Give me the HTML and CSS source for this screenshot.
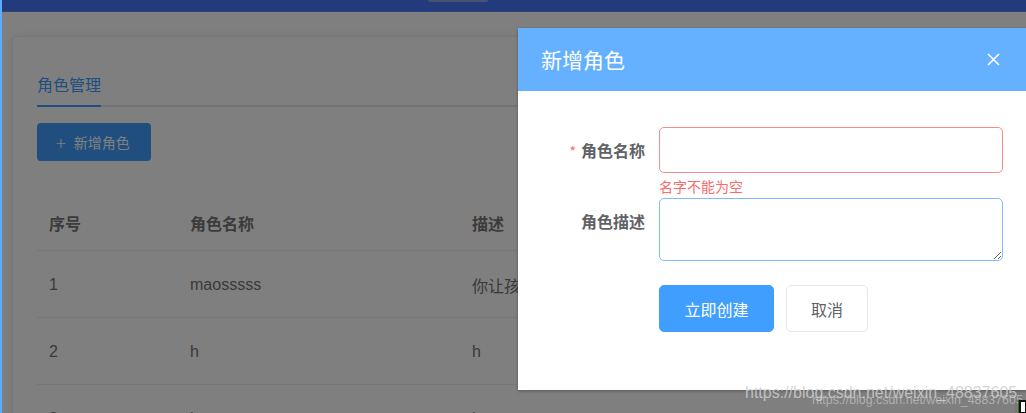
FILE: index.html
```html
<!DOCTYPE html>
<html lang="zh-CN">
<head>
<meta charset="utf-8">
<title>角色管理</title>
<link rel="stylesheet" href="styles.css">
</head>
<body>
<div class="screen">
  <div class="edge-strip"></div>
  <div class="page">
    <header class="topbar"><span class="topbar-pill"></span></header>
    <main class="main">
      <section class="card">
        <nav class="tabs">
          <span class="tab tab-active">角色管理</span>
        </nav>
        <button class="btn-add"><span class="plus">+</span>新增角色</button>
        <table class="grid">
          <colgroup><col class="c1"><col class="c2"><col></colgroup>
          <thead>
            <tr><th>序号</th><th>角色名称</th><th>描述</th></tr>
          </thead>
          <tbody>
            <tr><td>1</td><td>maosssss</td><td>你让孩子们开心一点</td></tr>
            <tr><td>2</td><td>h</td><td>h</td></tr>
            <tr><td>3</td><td>h</td><td>h</td></tr>
          </tbody>
        </table>
      </section>
    </main>
    <div class="overlay"></div>
    <div class="dialog">
      <div class="dialog-head">
        <span class="dialog-title">新增角色</span>
        <svg class="dialog-close" width="13" height="13" viewBox="0 0 13 13"><path d="M1 1L12 12M12 1L1 12" stroke="#fff" stroke-width="1.6" fill="none"/></svg>
      </div>
      <form class="dialog-body">
        <div class="form-item">
          <label class="form-label"><span class="req">*</span>角色名称</label>
          <div class="form-field">
            <input class="inp inp-error" type="text">
            <div class="form-error">名字不能为空</div>
          </div>
        </div>
        <div class="form-item">
          <label class="form-label">角色描述</label>
          <div class="form-field">
            <textarea class="inp txt"></textarea>
          </div>
        </div>
        <div class="form-item form-actions">
          <span class="form-label"></span>
          <div class="form-field actions">
            <button type="button" class="btn btn-primary">立即创建</button>
            <button type="button" class="btn btn-plain">取消</button>
          </div>
        </div>
      </form>
    </div>
    <div class="wm wm-1">https://blog.csdn.net/weixin_48837605</div>
    <div class="wm wm-2">https://blog.csdn.net/weixin_48837605</div>
    <div class="corner-box"></div>
  </div>
</div>
</body>
</html>
```

FILE: styles.css
```css
* { box-sizing: border-box; }
html, body { margin: 0; padding: 0; }
body {
  width: 1026px;
  height: 413px;
  overflow: hidden;
  background: #fff;
  font-family: "Liberation Sans", "Noto Sans CJK SC", sans-serif;
}
.screen {
  display: flex;
  width: 1026px;
  height: 413px;
}
.edge-strip {
  width: 2px;
  background: #5cadff;
  flex: none;
}
.page {
  position: relative;
  flex: 1;
  height: 413px;
  overflow: hidden;
  background: #fff;
}
.topbar {
  height: 12px;
  background: #4676f8;
  border-bottom: 1px solid #5a84f0;
  display: flex;
  align-items: flex-start;
}
.topbar-pill {
  margin-left: 426px;
  width: 60px;
  height: 2px;
  border-radius: 0 0 6px 6px;
  background: #8fa6e0;
}
.main {
  padding: 24px 10px 0 10px;
}
.card {
  border: 1px solid #ebeef5;
  border-radius: 4px;
  background: #fff;
  box-shadow: 0 2px 12px rgba(0,0,0,0.1);
  padding: 28px 24px 0 24px;
  height: 420px;
}
.tabs {
  display: flex;
  border-bottom: 2px solid #e4e7ed;
}
.tab {
  height: 40px;
  line-height: 38px;
  font-size: 16px;
  color: #303133;
  font-family: "Noto Sans CJK SC", sans-serif;
}
.tab-active {
  color: #409eff;
  border-bottom: 2px solid #409eff;
  margin-bottom: -2px;
  height: 42px;
}
.btn-add {
  margin-top: 16px;
  height: 38px;
  width: 114px;
  border: none;
  border-radius: 4px;
  background: #409eff;
  color: #fff;
  font-family: "Noto Sans CJK SC", sans-serif;
  font-size: 14px;
  display: flex;
  align-items: center;
  padding: 0 0 0 19px;
}
.plus {
  font-size: 18px;
  font-weight: 300;
  margin-right: 8px;
  line-height: 1;
}
.grid {
  margin-top: 35px;
  width: 100%;
  border-collapse: collapse;
  table-layout: fixed;
}
.grid .c1 { width: 141px; }
.grid .c2 { width: 282px; }
.grid th, .grid td {
  text-align: left;
  padding: 0 0 0 12px;
  border-bottom: 1px solid #ebeef5;
  font-size: 16px;
  white-space: nowrap;
  overflow: hidden;
}
.grid th {
  height: 54px;
  color: #777;
  font-weight: bold;
  font-family: "Noto Sans CJK SC", sans-serif;
  vertical-align: middle;
}
.grid td {
  height: 67px;
  padding-top: 2px;
  color: #747474;
}
.overlay {
  position: absolute;
  inset: 0;
  background: rgba(0,0,0,0.5);
}
.dialog {
  position: absolute;
  left: 516px;
  top: 28px;
  width: 510px;
  background: #fff;
  box-shadow: 0 1px 3px rgba(0,0,0,0.3);
}
.dialog-head {
  height: 63px;
  background: #66b1ff;
  display: flex;
  align-items: center;
  justify-content: space-between;
  padding: 0 28px 0 23px;
}
.dialog-title {
  color: #fff;
  font-size: 21px;
  font-family: "Noto Sans CJK SC", sans-serif;
  margin-top: -2px;
}
.dialog-close { display: block; }
.dialog-body {
  margin: 0;
  padding: 36px 25px 58px 20px;
}
.form-item {
  display: flex;
  margin-bottom: 24px;
}
.form-item.form-actions { margin-bottom: 0; }
.form-label {
  width: 121px;
  flex: none;
  text-align: right;
  padding-right: 14px;
  line-height: 46px;
  font-size: 16px;
  font-weight: bold;
  color: #606266;
  font-family: "Noto Sans CJK SC", sans-serif;
}
.req {
  color: #f56c6c;
  font-weight: normal;
  font-size: 14px;
  margin-right: 5px;
}
.form-field {
  flex: 1;
  position: relative;
}
.inp {
  display: block;
  width: 100%;
  border: 1px solid #dcdfe6;
  border-radius: 5px;
  background: #fff;
  outline: none;
  font: inherit;
  margin: 0;
}
.inp-error {
  height: 46px;
  border-color: #f78b8b;
}
.txt {
  height: 63px;
  border-color: #7fbcff;
  resize: vertical;
}
.form-error {
  position: absolute;
  top: 100%;
  left: 0;
  padding-top: 4px;
  font-size: 14px;
  line-height: 16px;
  color: #f56c6c;
  font-family: "Noto Sans CJK SC", sans-serif;
}
.actions {
  display: flex;
  gap: 12px;
}
.btn {
  height: 47px;
  padding: 0;
  border-radius: 5px;
  font-size: 16px;
  font-family: "Noto Sans CJK SC", sans-serif;
  white-space: nowrap;
  text-align: center;
  cursor: pointer;
}
.btn-primary {
  background: #409eff;
  border: 1px solid #409eff;
  color: #fff;
  width: 115px;
}
.btn-plain {
  background: #fff;
  border: 1px solid #e4e7ed;
  color: #606266;
  width: 82px;
}
.wm {
  position: absolute;
  white-space: nowrap;
  font-family: "Liberation Sans", sans-serif;
}
.wm-1 {
  left: 743px;
  top: 385px;
  font-size: 16px;
  line-height: 16px;
  color: rgba(205,205,205,0.85);
}
.wm-2 {
  left: 810px;
  top: 394px;
  font-size: 12.4px;
  line-height: 13px;
  color: rgba(210,210,210,0.6);
}
.corner-box {
  position: absolute;
  left: 1017px;
  top: 400px;
  width: 8px;
  height: 14px;
  background: #fff;
  border: 2px solid #111;
  box-shadow: -1px 0 0 #3d6e2a;
}
```
